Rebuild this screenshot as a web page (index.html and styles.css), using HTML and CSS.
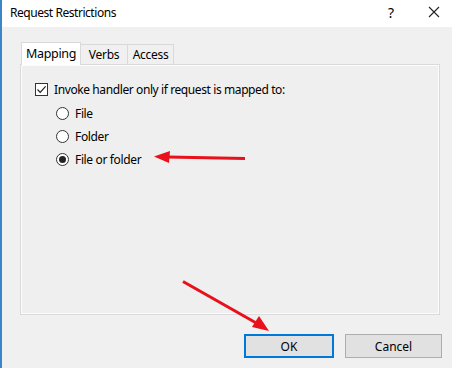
FILE: index.html
```html
<!DOCTYPE html>
<html>
<head>
<meta charset="utf-8">
<link rel="stylesheet" href="styles.css">
</head>
<body>
<div class="window">
  <div class="titlebar">
    <span class="title">Request Restrictions</span>
    <span class="help">?</span>
    <span class="close">
      <svg width="12" height="12" viewBox="0 0 12 12"><path d="M1 1L11 11M11 1L1 11" stroke="#222" stroke-width="1.1" fill="none"/></svg>
    </span>
  </div>
  <div class="content">
    <div class="tabs">
      <div class="tab active">Mapping</div>
      <div class="tab">Verbs</div>
      <div class="tab">Access</div>
    </div>
    <div class="panel">
      <label class="check-row">
        <span class="checkbox">
          <svg width="11" height="11" viewBox="0 0 11 11"><path d="M1.5 5.5L4.2 8.3L9.6 2.4" stroke="#222" stroke-width="1.2" fill="none"/></svg>
        </span>
        <span>Invoke handler only if request is mapped to:</span>
      </label>
      <div class="radios">
        <div class="radio-row"><span class="radio"></span><span>File</span></div>
        <div class="radio-row"><span class="radio"></span><span>Folder</span></div>
        <div class="radio-row"><span class="radio on"></span><span>File or folder</span></div>
      </div>
    </div>
    <div class="buttons">
      <button class="btn default">OK</button>
      <button class="btn cancel">Cancel</button>
    </div>
  </div>
  <svg class="annot" width="452" height="368" viewBox="0 0 452 368">
    <path d="M245 158.5L168 157" stroke="#e8101a" stroke-width="3" fill="none"/>
    <path d="M154 156.5L170 151L169 163Z" fill="#e8101a"/>
    <path d="M183 281.5L258 324" stroke="#e8101a" stroke-width="3" fill="none"/>
    <path d="M269 331L252 327L259 316Z" fill="#e8101a"/>
  </svg>
</div>
</body>
</html>
```
FILE: styles.css
```css
* { box-sizing: border-box; }
html, body { margin: 0; padding: 0; }
body {
  width: 452px;
  height: 368px;
  overflow: hidden;
  font-family: "Noto Sans", "Open Sans", sans-serif;
  font-size: 12px;
  color: #000;
  background: #f0f0f0;
}
.window {
  position: relative;
  width: 452px;
  height: 368px;
  border-left: 2px solid #3a86c8;
  background: #f0f0f0;
  display: flex;
  flex-direction: column;
}
.titlebar {
  height: 27px;
  background: #fff;
  display: flex;
  align-items: center;
  padding-left: 8px;
}
.title {
  font-size: 12px;
  letter-spacing: -0.45px;
  flex: 1;
  padding-bottom: 3px;
}
.help {
  font-size: 14px;
  width: 20px;
  margin-right: 20px;
  padding-bottom: 3px;
}
.close {
  width: 12px;
  height: 12px;
  margin-right: 12px;
  display: flex;
  margin-bottom: 4px;
}
.content {
  flex: 1;
  padding: 15px 12px 0 18px;
  display: flex;
  flex-direction: column;
}
.tabs {
  display: flex;
  align-items: flex-end;
  height: 22px;
  padding-left: 1px;
}
.tab {
  height: 20px;
  padding: 0 7px;
  border: 1px solid #d9d9d9;
  border-bottom: none;
  background: #f0f0f0;
  display: flex;
  align-items: center;
  justify-content: center;
  letter-spacing: -0.3px;
}
.tab + .tab { border-left: none; }
.tab.active {
  background: #fff;
  border-color: #d9d9d9;
  font-size: 12.5px;
  padding: 0 5px 2px;
  width: 60px;
  position: relative;
  z-index: 1;
  margin-bottom: -1px;
  height: 23px;
}
.tab:nth-child(2) { width: 47px; }
.tab:nth-child(3) { width: 46px; }
.panel {
  width: 420px;
  height: 251px;
  border: 1px solid #dadada;
  box-shadow: inset 0 0 0 1px #fbfbfb;
  background: #efefef;
  padding: 17px 0 0 14px;
}
.check-row {
  display: flex;
  align-items: center;
  gap: 6px;
  height: 14px;
  letter-spacing: -0.4px;
}
.checkbox {
  width: 13px;
  height: 13px;
  border: 1px solid #333;
  background: #fff;
  display: flex;
  align-items: center;
  justify-content: center;
}
.radios {
  padding-left: 21px;
  padding-top: 10px;
  display: flex;
  flex-direction: column;
  gap: 9px;
}
.radio-row {
  display: flex;
  align-items: center;
  gap: 6px;
  height: 14px;
  letter-spacing: -0.35px;
}
.radio {
  width: 13px;
  height: 13px;
  border: 1px solid #333;
  border-radius: 50%;
  background: #fff;
  display: flex;
  align-items: center;
  justify-content: center;
}
.radio.on::after {
  content: "";
  width: 7px;
  height: 7px;
  border-radius: 50%;
  background: #222;
}
.buttons {
  display: flex;
  justify-content: flex-end;
  gap: 11px;
  padding-top: 19px;
  padding-right: 0;
}
.btn {
  height: 24px;
  font-family: "Noto Sans", "Open Sans", sans-serif;
  font-size: 12px;
  color: #000;
  background: #e1e1e1;
  border: 1px solid #adadad;
  padding: 0;
}
.btn.default {
  width: 90px;
  border: 2px solid #0078d7;
}
.btn.cancel {
  width: 97px;
  margin-right: -2px;
}
.annot {
  position: absolute;
  left: -2px;
  top: 0;
  pointer-events: none;
}
```
